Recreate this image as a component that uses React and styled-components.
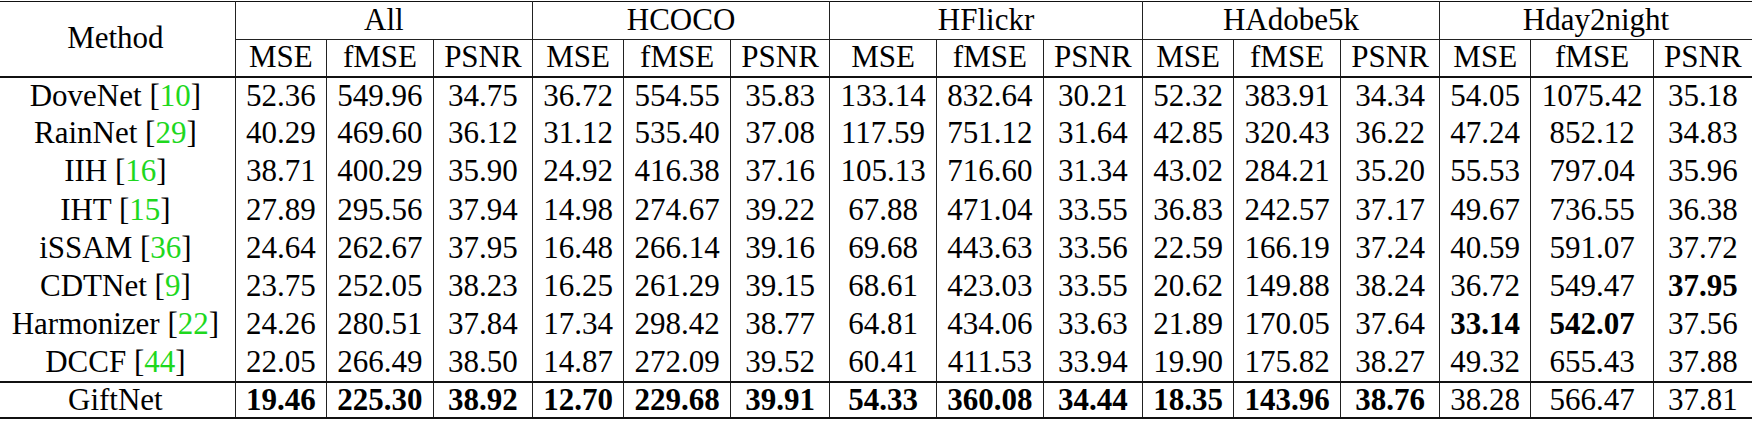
import React from 'react';
import styled, { createGlobalStyle } from 'styled-components';

const Global = createGlobalStyle`
  html, body { margin: 0; padding: 0; background: #fff; }
  body {
    font-family: "Liberation Serif", "Times New Roman", serif;
    color: #000;
    overflow: hidden;
  }
`;

const Table = styled.table`
  width: 1752px;
  border-collapse: collapse;
  font-size: 31px;
  line-height: 1;
  margin-top: 1px;
  border-top: 1.5px solid #111;
  border-bottom: 2px solid #111;
`;

const Cell = styled.td`
  padding: ${(p) => (p.$first ? '0 15px 2px 11px' : '0 10px 2px')};
  height: ${(p) => p.$h || 38.2}px;
  box-sizing: border-box;
  white-space: nowrap;
  text-align: center;
  vertical-align: middle;
  font-weight: ${(p) => (p.$bold ? 700 : 400)};
  border-left: ${(p) => (p.$first ? 'none' : '1px solid #222')};
`;

const HeadRow = styled.tr`
  border-bottom: ${(p) => (p.$rule ? '2px solid #111' : 'none')};
`;

const GroupCell = styled(Cell).attrs({ as: 'th' })`
  font-weight: 400;
  border-bottom: 1px solid #222;
`;

const SubCell = styled(Cell).attrs({ as: 'th' })`
  font-weight: 400;
`;

const BodyRow = styled.tr`
  border-top: ${(p) => (p.$rule ? '2px solid #111' : 'none')};
`;

const Cite = styled.span`
  color: #1ed81e;
`;

const groups = ['All', 'HCOCO', 'HFlickr', 'HAdobe5k', 'Hday2night'];
const metrics = ['MSE', 'fMSE', 'PSNR'];

const rows = [
  ['DoveNet', '10', ['52.36','549.96','34.75','36.72','554.55','35.83','133.14','832.64','30.21','52.32','383.91','34.34','54.05','1075.42','35.18']],
  ['RainNet', '29', ['40.29','469.60','36.12','31.12','535.40','37.08','117.59','751.12','31.64','42.85','320.43','36.22','47.24','852.12','34.83']],
  ['IIH', '16', ['38.71','400.29','35.90','24.92','416.38','37.16','105.13','716.60','31.34','43.02','284.21','35.20','55.53','797.04','35.96']],
  ['IHT', '15', ['27.89','295.56','37.94','14.98','274.67','39.22','67.88','471.04','33.55','36.83','242.57','37.17','49.67','736.55','36.38']],
  ['iSSAM', '36', ['24.64','262.67','37.95','16.48','266.14','39.16','69.68','443.63','33.56','22.59','166.19','37.24','40.59','591.07','37.72']],
  ['CDTNet', '9', ['23.75','252.05','38.23','16.25','261.29','39.15','68.61','423.03','33.55','20.62','149.88','38.24','36.72','549.47','*37.95']],
  ['Harmonizer', '22', ['24.26','280.51','37.84','17.34','298.42','38.77','64.81','434.06','33.63','21.89','170.05','37.64','*33.14','*542.07','37.56']],
  ['DCCF', '44', ['22.05','266.49','38.50','14.87','272.09','39.52','60.41','411.53','33.94','19.90','175.82','38.27','49.32','655.43','37.88']],
];

const ours = ['*19.46','*225.30','*38.92','*12.70','*229.68','*39.91','*54.33','*360.08','*34.44','*18.35','*143.96','*38.76','38.28','566.47','37.81'];

const Value = ({ v, h }) => {
  const bold = v.startsWith('*');
  return <Cell $h={h} $bold={bold}>{bold ? v.slice(1) : v}</Cell>;
};

export default function App() {
  return (
    <>
      <Global />
      <Table>
        <thead>
          <HeadRow>
            <SubCell $first $h={38} rowSpan={2}>Method</SubCell>
            {groups.map((g) => (
              <GroupCell key={g} $h={38} colSpan={3}>{g}</GroupCell>
            ))}
          </HeadRow>
          <HeadRow $rule>
            {groups.map((g) =>
              metrics.map((m) => <SubCell key={g + m} $h={37}>{m}</SubCell>)
            )}
          </HeadRow>
        </thead>
        <tbody>
          {rows.map(([name, ref, vals]) => (
            <BodyRow key={name}>
              <Cell $first>
                {name} [<Cite>{ref}</Cite>]
              </Cell>
              {vals.map((v, i) => <Value key={i} v={v} />)}
            </BodyRow>
          ))}
          <BodyRow $rule>
            <Cell $first $h={36}>GiftNet</Cell>
            {ours.map((v, i) => <Value key={i} h={36} v={v} />)}
          </BodyRow>
        </tbody>
      </Table>
    </>
  );
}
